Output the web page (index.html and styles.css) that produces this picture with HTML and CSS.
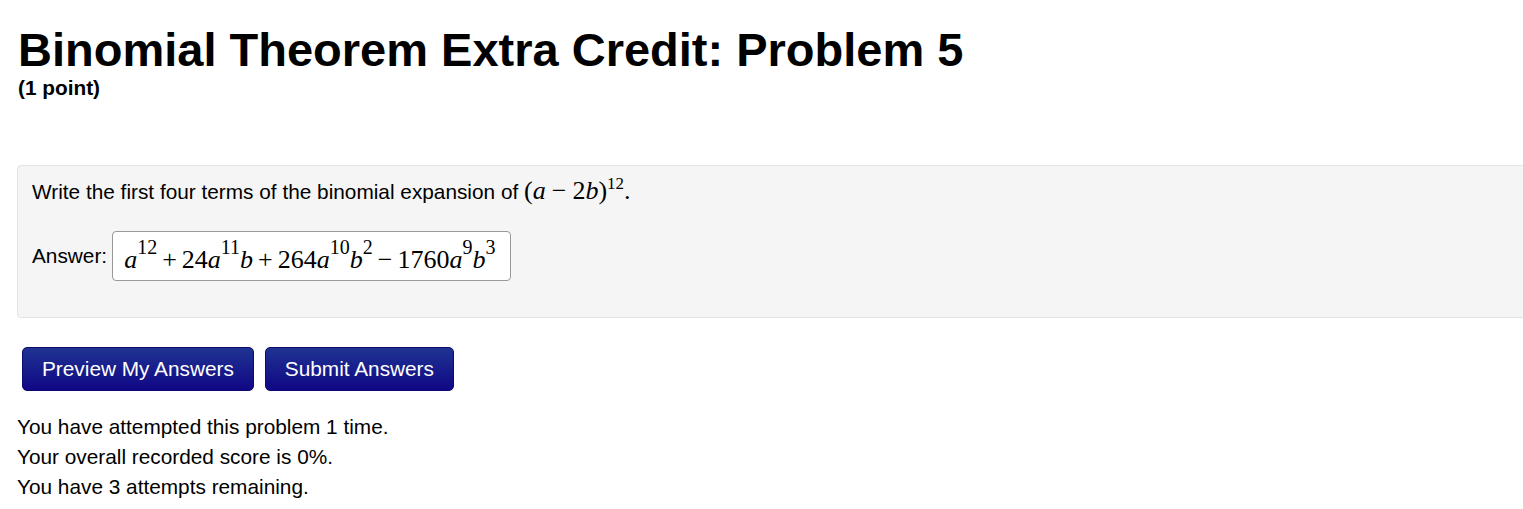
FILE: index.html
```html
<!DOCTYPE html>
<html>
<head>
<meta charset="utf-8">
<link rel="stylesheet" href="styles.css">
</head>
<body>
<div class="page">
  <h1 class="title">Binomial Theorem Extra Credit: Problem 5</h1>
  <div class="points">(1 point)</div>
  <div class="problem">
    <p class="question">Write the first four terms of the binomial expansion of <span class="math">(<i>a</i><span class="op">−</span>2<i>b</i>)<sup class="qsup">12</sup>.</span></p>
    <div class="answer-row">
      <span class="answer-label">Answer:</span>
      <div class="answer-box"><span class="math big"><i>a</i><sup>12</sup><span class="op">+</span>24<i>a</i><sup>11</sup><i>b</i><span class="op">+</span>264<i>a</i><sup>10</sup><i>b</i><sup>2</sup><span class="op">−</span>1760<i>a</i><sup>9</sup><i>b</i><sup>3</sup></span></div>
    </div>
  </div>
  <div class="buttons">
    <button class="btn">Preview My Answers</button>
    <button class="btn">Submit Answers</button>
  </div>
  <div class="status">
    <div>You have attempted this problem 1 time.</div>
    <div>Your overall recorded score is 0%.</div>
    <div>You have 3 attempts remaining.</div>
  </div>
</div>
</body>
</html>
```
FILE: styles.css
```css
html, body {
  margin: 0;
  padding: 0;
  background: #fff;
  overflow: hidden;
}
body {
  font-family: "Liberation Sans", Arial, sans-serif;
  color: #000;
  font-size: 20.8px;
  line-height: 1.43;
}
.page {
  padding: 24px 0 0 17px;
}
.title {
  margin: 0 0 0 1px;
  font-size: 47px;
  line-height: 1.1;
  font-weight: bold;
}
.points {
  margin: 0 0 0 1px;
  font-weight: bold;
  font-size: 20.8px;
  line-height: 1.2;
}
.problem {
  margin-top: 64px;
  width: 1540px;
  box-sizing: border-box;
  height: 153px;
  background: #f5f5f5;
  border: 1px solid #e3e3e3;
  border-radius: 4px;
  padding: 10px 14px;
}
.question {
  margin: 0;
  line-height: 30px;
}
.math {
  font-family: "Liberation Serif", "Times New Roman", serif;
  font-size: 26px;
}
.math i {
  font-style: italic;
}
.op {
  margin: 0 6px;
}
.qsup {
  font-size: 17px;
  vertical-align: 10px;
  line-height: 0;
}
.answer-row {
  display: flex;
  align-items: center;
  margin-top: 24px;
  gap: 5px;
}
.answer-box {
  background: #fff;
  border: 1px solid #999;
  border-radius: 4px;
  height: 50px;
  box-sizing: border-box;
  width: 399px;
  padding: 8px 10px 0 11px;
  line-height: 40px;
  white-space: nowrap;
}
.big {
  font-size: 26px;
}
.big .op {
  margin: 0 5px;
}
.big sup {
  font-size: 20px;
  vertical-align: 14px;
  line-height: 0;
}
.buttons {
  display: flex;
  gap: 11px;
  margin: 29px 0 0 5px;
}
.btn {
  font-family: "Liberation Sans", Arial, sans-serif;
  font-size: 20.8px;
  color: #fff;
  height: 44px;
  padding: 0 19px;
  border: 1px solid #0c0a6e;
  border-radius: 5px;
  background: linear-gradient(to bottom, #1f3391, #100786);
}
.status {
  margin-top: 21px;
  line-height: 30px;
}
```
